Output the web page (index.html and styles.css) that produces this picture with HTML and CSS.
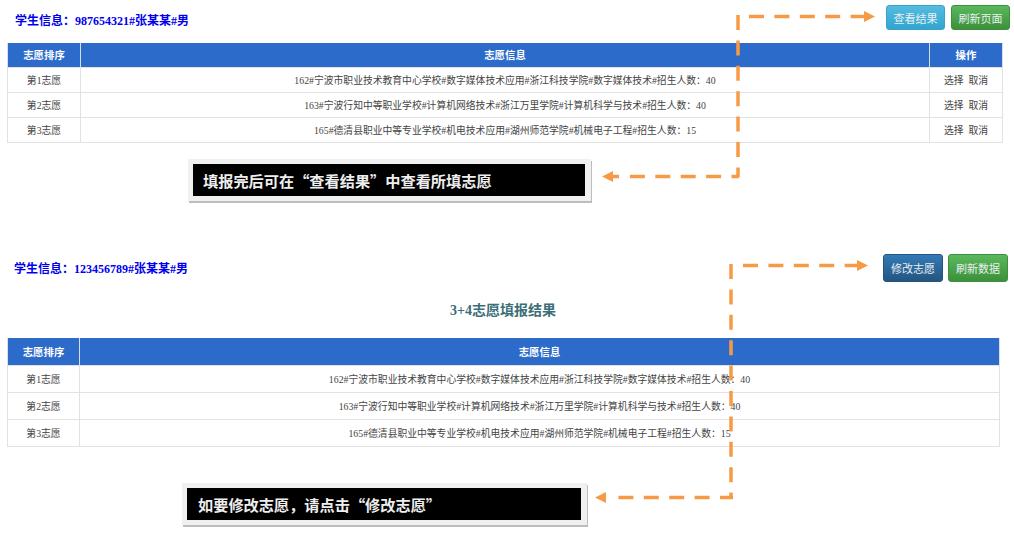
FILE: index.html
```html
<!DOCTYPE html>
<html lang="zh-CN">
<head>
    <meta charset="UTF-8">
    <meta name="viewport" content="width=device-width, initial-scale=1.0">
    <title>志愿填报说明</title>
    <link rel="stylesheet" href="styles.css">
</head>
<body>
    <section class="panel panel-top">
        <div class="panel-head">
            <div class="student">学生信息：987654321#张某某#男</div>
            <div class="actions">
                <button class="btn btn-info">查看结果</button>
                <button class="btn btn-success">刷新页面</button>
            </div>
        </div>
        <table class="grid">
            <thead>
                <tr><th class="col-rank">志愿排序</th><th>志愿信息</th><th class="col-op">操作</th></tr>
            </thead>
            <tbody>
                <tr><td>第1志愿</td><td>162#宁波市职业技术教育中心学校#数字媒体技术应用#浙江科技学院#数字媒体技术#招生人数：40</td><td>选择&nbsp;&nbsp;取消</td></tr>
                <tr><td>第2志愿</td><td>163#宁波行知中等职业学校#计算机网络技术#浙江万里学院#计算机科学与技术#招生人数：40</td><td>选择&nbsp;&nbsp;取消</td></tr>
                <tr><td>第3志愿</td><td>165#德清县职业中等专业学校#机电技术应用#湖州师范学院#机械电子工程#招生人数：15</td><td>选择&nbsp;&nbsp;取消</td></tr>
            </tbody>
        </table>
        <div class="callout"><div class="callout-text">填报完后可在“查看结果”中查看所填志愿</div></div>
    </section>

    <section class="panel panel-bottom">
        <div class="panel-head">
            <div class="student">学生信息：123456789#张某某#男</div>
            <div class="actions">
                <button class="btn btn-primary">修改志愿</button>
                <button class="btn btn-success">刷新数据</button>
            </div>
        </div>
        <h2 class="result-title">3+4志愿填报结果</h2>
        <table class="grid">
            <thead>
                <tr><th class="col-rank">志愿排序</th><th>志愿信息</th></tr>
            </thead>
            <tbody>
                <tr><td>第1志愿</td><td>162#宁波市职业技术教育中心学校#数字媒体技术应用#浙江科技学院#数字媒体技术#招生人数：40</td></tr>
                <tr><td>第2志愿</td><td>163#宁波行知中等职业学校#计算机网络技术#浙江万里学院#计算机科学与技术#招生人数：40</td></tr>
                <tr><td>第3志愿</td><td>165#德清县职业中等专业学校#机电技术应用#湖州师范学院#机械电子工程#招生人数：15</td></tr>
            </tbody>
        </table>
        <div class="callout"><div class="callout-text">如要修改志愿，请点击“修改志愿”</div></div>
    </section>

    <!-- orange dashed arrows drawn over the tables -->
    <svg class="arrows" width="1014" height="550" viewBox="0 0 1014 550">
        <g class="dash">
            <path d="M738 15V177"/>
            <path d="M749 16.500H864"/>
            <path d="M739 176.500H629" stroke-dashoffset="7.500"/>
            <path d="M731 264V498"/>
            <path d="M743 265.500H857"/>
            <path d="M733 497.500H618" stroke-dashoffset="2"/>
        </g>
        <g class="head">
            <path d="M875 16.500L864 11V22Z"/>
            <path d="M602 176.500L613 171V174.750H619V178.250H613V182Z"/>
            <path d="M868 265.500L857 260V271Z"/>
            <path d="M595 497.500L606 492V503Z"/>
        </g>
    </svg>
</body>
</html>
```

FILE: styles.css
```css
body {
    margin: 0;
    background: #fff;
    font-family: "Liberation Serif", "Noto Sans CJK SC", serif;
    position: relative;
    height: 550px;
    overflow: hidden;
}

.panel-top {
    padding-top: 5px;
}

.panel-bottom {
    padding-top: 53px;
}

.panel-head {
    display: flex;
    justify-content: space-between;
    align-items: center;
}

.panel-top .panel-head {
    height: 25px;
    padding: 0 4px 0 15px;
    margin-bottom: 13px;
}

.panel-bottom .panel-head {
    height: 28px;
    padding: 0 6px 0 14px;
}

.panel-top .student {
    padding-top: 5px;
}

.student {
    color: #0000ee;
    font-size: 12px;
    font-weight: 700;
}

.actions {
    display: flex;
    gap: 6px;
}

.panel-bottom .actions {
    gap: 5px;
}

.btn {
    width: 59px;
    height: 25px;
    padding: 0;
    border-radius: 3px;
    font-family: "Noto Sans CJK SC", sans-serif;
    font-size: 11px;
    color: #e8f0f0;
    cursor: pointer;
}

.panel-bottom .btn {
    width: 60px;
    height: 28px;
}

.btn-info {
    background: linear-gradient(#53bce0, #33a4d0);
    border: 1px solid #3aa3cc;
}

.btn-success {
    background: linear-gradient(#5cb85c, #3b913b);
    border: 1px solid #3e8f3e;
}

.btn-primary {
    background: linear-gradient(#337ab7, #245580);
    border: 1px solid #245580;
}

.grid {
    border-collapse: collapse;
    table-layout: fixed;
    margin-left: 7px;
    font-size: 9.800px;
    color: #444;
    text-align: center;
}

.panel-top .grid {
    width: 996px;
}

.panel-bottom .grid {
    width: 993px;
}

.grid th {
    background: #2d6bcb;
    color: #fff;
    font-size: 10.400px;
    font-weight: 700;
    border: 1px solid #d6dfee;
    border-top: 0;
    border-bottom: 0;
    padding: 0 0 1px;
}

.grid td {
    border: 1px solid #e2e2e2;
    padding: 0;
}

.panel-top .grid th {
    height: 23px;
}

.panel-top .grid td {
    height: 24px;
}

.panel-bottom .grid th {
    height: 26px;
}

.panel-bottom .grid td {
    height: 26px;
}

.col-rank {
    width: 72px;
}

.panel-bottom .col-rank {
    width: 71px;
}

.col-op {
    width: 72px;
}

.result-title {
    margin: 17px 0 15px;
    padding-right: 8px;
    height: 24px;
    line-height: 24px;
    text-align: center;
    font-size: 14px;
    font-weight: 700;
    color: #3c6e78;
}

.callout {
    width: 392px;
    padding: 5px 6px 5px 5px;
    background: #f0f0f0;
    box-shadow: 1px 2px 0 #bdbdbd;
}

.panel-top .callout {
    margin: 16px 0 0 188px;
}

.panel-bottom .callout {
    margin: 36px 0 0 182px;
    width: 394px;
}

.callout-text {
    height: 32px;
    line-height: 32px;
    padding-left: 10px;
    background: #000;
    color: #eee;
    font-family: "Noto Sans CJK SC", sans-serif;
    font-size: 15.200px;
    font-weight: 700;
}

.panel-bottom .callout-text {
    padding-left: 11px;
}

.arrows {
    position: absolute;
    top: 0;
    left: 0;
    pointer-events: none;
}

.dash path {
    fill: none;
    stroke: #f79a45;
    stroke-width: 3.500;
    stroke-dasharray: 15 10.400;
}

.head path {
    fill: #f79a45;
}
```
